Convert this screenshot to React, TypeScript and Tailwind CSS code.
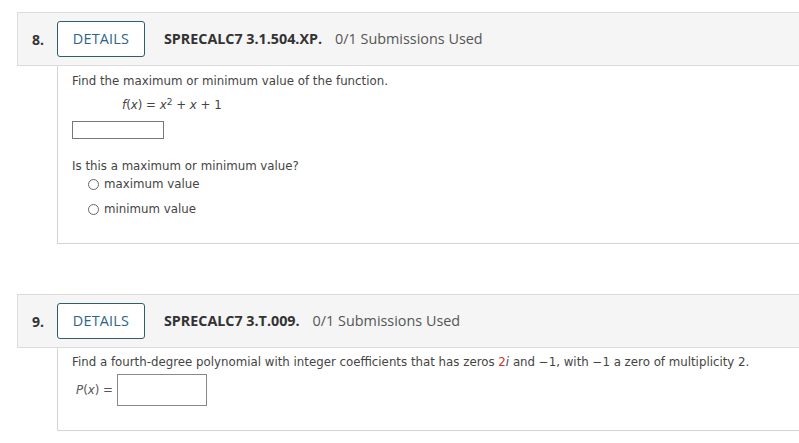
import React from "react";

const hdr = "font-['Open_Sans',sans-serif]";
const body = "font-['DejaVu_Sans','Verdana',sans-serif] text-[11.8px] leading-[16px] text-[#444]";

function Header({ num, code }: { num: string; code: string }) {
  return (
    <div className={`h-[54px] flex items-center border-y border-l border-[#dcdcdc] bg-[#f5f5f5] ${hdr}`}>
      <div className="w-[39px] pl-[14px] text-[14px] font-bold text-[#333]">{num}</div>
      <div className="w-[88px] h-[36px] flex items-center justify-center border border-[#2f5d6b] rounded-[3px] bg-white text-[14.4px] text-[#2b6487] tracking-[0.2px]">
        DETAILS
      </div>
      <div className="ml-[19px] text-[14.3px] font-bold text-[#333]">{code}</div>
      <div className="ml-[13px] text-[14.4px] text-[#555]">0/1 Submissions Used</div>
    </div>
  );
}

function Radio({ label }: { label: string }) {
  return (
    <div className="flex items-center pl-[16px] h-[16px]">
      <span className="w-[11px] h-[11px] rounded-full border border-[#666] bg-white" />
      <span className="ml-[5px]">{label}</span>
    </div>
  );
}

export default function App() {
  return (
    <div className="w-[799px] h-[443px] bg-white overflow-hidden pt-[12px]">
      {/* Question 8 */}
      <div className="ml-[17px]">
        <Header num="8." code="SPRECALC7 3.1.504.XP." />
        <div className={`ml-[40px] border-l border-b border-[#d4d4d4] h-[178px] pl-[14px] pt-[7px] ${body}`}>
          <div>Find the maximum or minimum value of the function.</div>
          <div className="mt-[8px] pl-[50px] h-[16px]">
            <i>f</i>(<i>x</i>) = <i>x</i>
            <sup className="text-[9px]">2</sup> + <i>x</i> + 1
          </div>
          <div className="mt-[8px] w-[92px] h-[18px] border border-[#777] bg-white" />
          <div className="mt-[19px]">Is this a maximum or minimum value?</div>
          <div className="mt-[2px]">
            <Radio label="maximum value" />
          </div>
          <div className="mt-[9px]">
            <Radio label="minimum value" />
          </div>
        </div>
      </div>

      {/* Question 9 */}
      <div className="ml-[17px] mt-[50px]">
        <Header num="9." code="SPRECALC7 3.T.009." />
        <div className={`ml-[40px] border-l border-b border-[#d4d4d4] h-[83px] pl-[14px] pt-[6px] ${body}`}>
          <div>
            Find a fourth-degree polynomial with integer coefficients that has zeros{" "}
            <span className="text-[#d0312d]">2</span>
            <i>i</i> and −1, with −1 a zero of multiplicity 2.
          </div>
          <div className="mt-[4px] flex items-center">
            <span className="pl-[4px] text-[#555]">
              <i>P</i>(<i>x</i>) =
            </span>
            <div className="ml-[4px] w-[90px] h-[32px] border border-[#888] bg-white" />
          </div>
        </div>
      </div>
    </div>
  );
}
